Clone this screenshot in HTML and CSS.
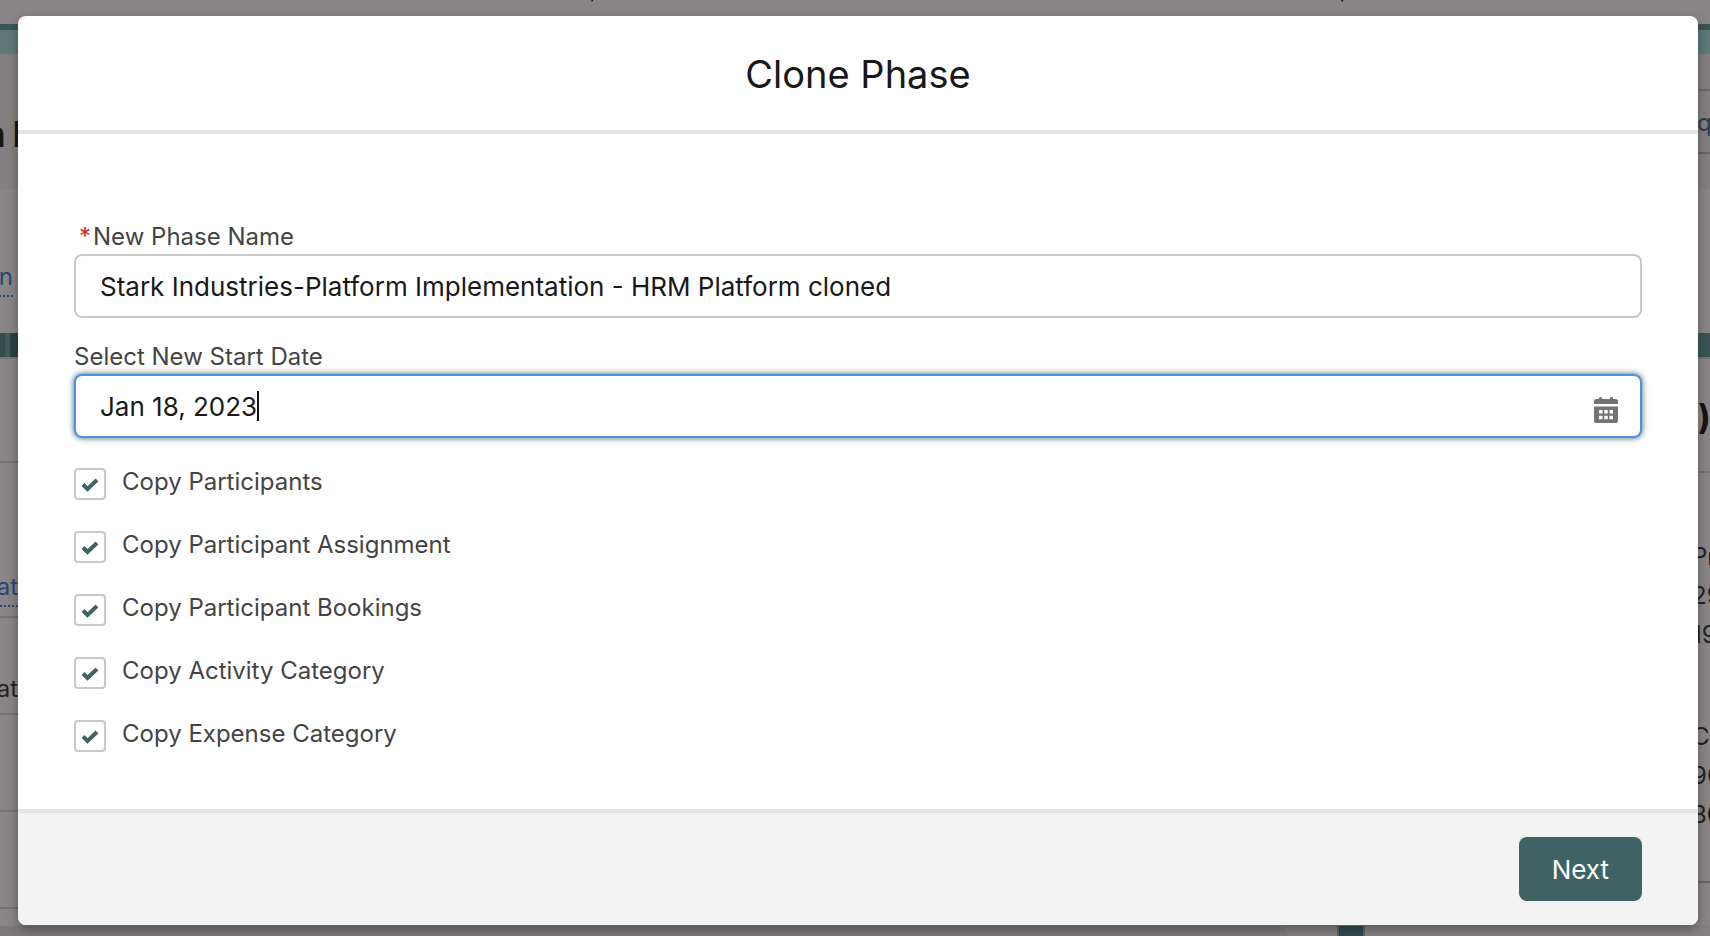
FILE: index.html
```html
<!DOCTYPE html>
<html lang="en">
<head>
<meta charset="utf-8">
<title>Clone Phase</title>
<link rel="stylesheet" href="styles.css">
</head>
<body>
<div class="page" aria-hidden="true">
  <div class="topbar"><span class="tab">p</span><span class="tab">p</span></div>
  <div class="ribbon"></div>
  <div class="record-head">
    <span class="left title"><span>n</span><span>P</span></span>
    <span class="right outline">q</span>
  </div>
  <div class="fields"><span class="left"><span class="link">n</span></span></div>
  <div class="pattern"></div>
  <div class="cards">
    <div class="main-card">
      <div class="cell first"></div>
      <div class="cell second"><span class="link">at</span></div>
      <div class="cell third">at</div>
      <div class="cell fourth"></div>
      <div class="cell fourth"></div>
    </div>
    <div class="side-card">
      <div class="count">)</div>
      <div class="group">Pr<br>29<br>19</div>
      <div class="group later">C<br>90<br>80</div>
    </div>
  </div>
  <div class="underbar"><span class="chip"></span><span class="post"></span></div>
</div>

<form class="modal" role="dialog" aria-modal="true" aria-labelledby="dialog-title">
  <header class="modal-head"><h1 id="dialog-title">Clone Phase</h1></header>
  <main class="modal-body">
    <div class="field">
      <label class="required" for="phase-name"><abbr title="required">*</abbr>New Phase Name</label>
      <input class="text" id="phase-name" type="text" value="Stark Industries-Platform Implementation - HRM Platform cloned">
    </div>
    <div class="field">
      <label for="start-date">Select New Start Date</label>
      <div class="date">
        <input class="text active" id="start-date" type="text" value="Jan 18, 2023">
        <span class="caret"></span>
        <button class="calendar" type="button" aria-label="Select a date">
          <svg viewBox="0 0 24 26" width="24" height="26" fill="#747474">
            <path d="M2 2h3V1q0-1 1.500-1T8 1v1h8V1q0-1 1.500-1T19 1v1h3q2 0 2 2v3H0V4q0-2 2-2z"/>
            <path fill-rule="evenodd" d="M0 9.500h24V24q0 2-2 2H2q-2 0-2-2zM5 13v3.500h3.500V13zm5.300 0v3.500h3.400V13zm5.200 0v3.500H19V13zM5 18.800v3.500h3.500v-3.500zm5.300 0v3.500h3.400v-3.500zm5.200 0v3.500H19v-3.500z"/>
          </svg>
        </button>
      </div>
    </div>
    <div class="checks">
      <label class="check"><input type="checkbox" checked><svg viewBox="0 0 32 32"><path d="M9 16.500l4.500 4.500L23 12"/></svg><span>Copy Participants</span></label>
      <label class="check"><input type="checkbox" checked><svg viewBox="0 0 32 32"><path d="M9 16.500l4.500 4.500L23 12"/></svg><span>Copy Participant Assignment</span></label>
      <label class="check"><input type="checkbox" checked><svg viewBox="0 0 32 32"><path d="M9 16.500l4.500 4.500L23 12"/></svg><span>Copy Participant Bookings</span></label>
      <label class="check"><input type="checkbox" checked><svg viewBox="0 0 32 32"><path d="M9 16.500l4.500 4.500L23 12"/></svg><span>Copy Activity Category</span></label>
      <label class="check"><input type="checkbox" checked><svg viewBox="0 0 32 32"><path d="M9 16.500l4.500 4.500L23 12"/></svg><span>Copy Expense Category</span></label>
    </div>
  </main>
  <footer class="modal-foot"><button class="next" type="button">Next</button></footer>
</form>
</body>
</html>
```
FILE: styles.css
```css
* { box-sizing: border-box; }
body {
  margin: 0;
  height: 100vh;
  overflow: hidden;
  position: relative;
  background: #8a8687;
  color: #444;
  font-family: Inter, "Liberation Sans", sans-serif;
  font-size: 24px;
}

/* Dimmed page under the dialog */
.page { height: 100%; overflow: hidden; display: flex; flex-direction: column; color: #222; white-space: nowrap; }
.topbar { height: 24px; display: flex; justify-content: space-between; padding: 0 21% 0 34.500%; color: #111; font-size: 18px; }
.topbar .tab { line-height: 20px; height: 20px; margin-top: -18px; }
.ribbon { height: 30px; background: #5f797b; border-top: 6px solid #3a5658; border-bottom: 1px solid #747273; }
.record-head { height: 135px; background: #848081; display: flex; justify-content: space-between; align-items: flex-start; padding-top: 35px; }
.left { display: flex; justify-content: flex-end; }
.right { width: 18px; }
.title { color: #171717; font-size: 36px; font-weight: 500; line-height: 90px; width: 35px; gap: 6px; }
.outline { border: solid #686667; border-width: 2px 0; color: #293f41; line-height: 64px; height: 65px; padding-left: 5px; }
.fields { height: 144px; padding-top: 70px; }
.fields .left { width: 13px; }
.link { color: #294776; border-bottom: 2px dotted #294776; line-height: 36px; }
.pattern { height: 24px; background: linear-gradient(90deg, #344c4e 0 5px, #405a5c 5px 10px, #2d4244 10px 18px, #3c5658 18px); }
.cards { flex: 1; display: flex; justify-content: space-between; border-top: 2px solid #777475; }
.main-card { width: 18px; }
.cell { border-bottom: 2px solid #757273; display: flex; justify-content: flex-end; align-items: flex-end; }
.first { height: 104px; }
.second { height: 155px; padding-bottom: 9px; }
.third { height: 97px; padding-bottom: 10px; }
.fourth { height: 97px; }
.side-card { width: 18px; height: 524px; border-bottom: 2px solid #686667; line-height: 39px; }
.count { height: 114px; padding: 38px 0 0 6px; font-size: 34px; font-weight: 700; color: #151515; border-bottom: 2px solid #757273; }
.group { padding-top: 64px; }
.later { padding-top: 63px; }
.underbar { height: 10px; background: #858182; display: flex; }
.chip { width: 1287px; background: #7b7879; border-radius: 0 10px 0 0; margin-right: 50px; }
.post { width: 28px; background: #304b4e; border: solid #626263; border-width: 0 2px; }

/* Dialog */
.modal {
  position: absolute;
  top: 16px;
  left: 18px;
  right: 12px;
  background: #fff;
  border-radius: 8px;
  overflow: hidden;
  box-shadow: 0 4px 12px rgba(0, 0, 0, .35);
}
.modal-head { padding: 32px 32px 30px; border-bottom: 4px solid #e5e5e5; text-align: center; }
.modal-head h1 { margin: 0; color: #181818; font-size: 38px; font-weight: 400; line-height: 52px; }
.modal-body { padding: 86px 56px 57px; }
.field { margin-bottom: 22px; }
.field label { display: block; line-height: 34px; }
.field .required { padding-left: 5px; }
.required abbr { color: #d0282e; text-decoration: none; margin-right: 2px; }
.text {
  display: block;
  width: 100%;
  height: 64px;
  padding: 0 24px;
  border: 2px solid #c9c9c9;
  border-radius: 8px;
  background: #fff;
  color: #181818;
  font: 400 26px Inter, "Liberation Sans", sans-serif;
  outline: 0;
}
.date { position: relative; }
.active { border-color: #4f91e0; box-shadow: 0 0 6px #3f6264; }
.caret { position: absolute; left: 183px; top: 17px; width: 2px; height: 30px; background: #111; }
.calendar { position: absolute; right: 24px; top: 23px; padding: 0; border: 0; background: none; line-height: 0; }
.checks { display: flex; flex-direction: column; gap: 31px; padding-top: 8px; }
.check { display: grid; grid-template-columns: 32px 1fr; column-gap: 16px; height: 32px; line-height: 28px; }
.check input, .check svg { grid-area: 1 / 1; width: 32px; height: 32px; margin: 0; }
.check span { grid-area: 1 / 2; }
.check input { appearance: none; border: 2px solid #c9c9c9; border-radius: 4px; background: #fff; }
.check svg { z-index: 1; fill: none; stroke: #3f6264; stroke-width: 4; pointer-events: none; }
.modal-foot { display: flex; justify-content: flex-end; padding: 24px 56px; background: #f3f3f3; border-top: 4px solid #e5e5e5; }
.next { height: 64px; padding: 0 33px; border: 0; border-radius: 8px; background: #3f6264; color: #fff; font: 400 26px Inter, "Liberation Sans", sans-serif; }
```
